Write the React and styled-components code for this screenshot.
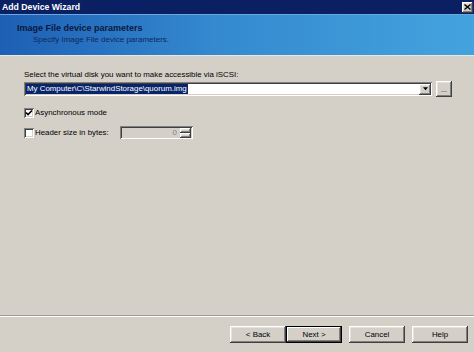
import React from 'react';
import styled, { createGlobalStyle, css } from 'styled-components';

const GlobalStyle = createGlobalStyle`
	html, body {
		margin: 0;
		padding: 0;
		background: #d4d0c8;
	}
	body {
		font-family: 'Liberation Sans', Arial, sans-serif;
		font-size: 7.9px;
		color: #000;
	}
`;

const bevelOut = css`
	box-shadow: inset -1px -1px 0 #404040, inset 1px 1px 0 #ffffff, inset -2px -2px 0 #808080, inset 2px 2px 0 #e4e2dc;
`;

const bevelIn = css`
	box-shadow: inset 1px 1px 0 #808080, inset -1px -1px 0 #ffffff, inset 2px 2px 0 #404040, inset -2px -2px 0 #d4d0c8;
`;

const Window = styled.div`
	width: 474px;
	height: 352px;
	display: flex;
	flex-direction: column;
	background: #d4d0c8;
	overflow: hidden;
`;

const TitleBar = styled.div`
	height: 14px;
	display: flex;
	align-items: center;
	justify-content: space-between;
	padding: 0 1px 0 2px;
	background: #0b1f63;
	color: #fff;
	font-weight: bold;
	font-size: 8.7px;
`;

const CloseButton = styled.div`
	width: 11px;
	height: 11px;
	display: flex;
	align-items: center;
	justify-content: center;
	background: #d4d0c8;
	${bevelOut};
`;

const Header = styled.div`
	height: 42px;
	padding: 8px 0 0 17px;
	box-sizing: border-box;
	border-top: 1px solid #6aa8e4;
	border-bottom: 1px solid #e9e7e2;
	background: linear-gradient(to right, #1d5fb4 0%, #3489cf 45%, #44a3de 100%);
	color: #0a1840;
`;

const Heading = styled.div`
	font-weight: bold;
	font-size: 9px;
	line-height: 11px;
`;

const SubHeading = styled.div`
	padding-left: 16px;
	line-height: 11px;
	font-size: 8px;
	color: #10285a;
`;

const Content = styled.div`
	display: flex;
	flex-direction: column;
	padding: 14px 0 0 24px;
`;

const Label = styled.div`
	line-height: 10px;
	margin-bottom: 1px;
`;

const ComboRow = styled.div`
	display: flex;
	align-items: center;
	gap: 4px;
`;

const Combo = styled.div`
	width: 408px;
	height: 14px;
	box-sizing: border-box;
	display: flex;
	align-items: center;
	justify-content: space-between;
	padding: 2px 1px 2px 2px;
	background: #fff;
	${bevelIn};
`;

const Selected = styled.span`
	background: #0a246a;
	color: #fff;
	line-height: 10px;
	padding: 0 1px;
`;

const ArrowButton = styled.div`
	width: ${(p) => p.w || 12}px;
	height: ${(p) => p.h || 11}px;
	display: flex;
	align-items: center;
	justify-content: center;
	background: #d4d0c8;
	${bevelOut};
`;

const BrowseButton = styled.div`
	width: 16px;
	height: 16px;
	display: flex;
	align-items: center;
	justify-content: center;
	background: #d4d0c8;
	font-size: 7px;
	line-height: 7px;
	${bevelOut};
`;

const CheckRow = styled.div`
	display: flex;
	align-items: center;
	margin-top: ${(p) => p.mt}px;
	height: 13px;
`;

const CheckBox = styled.div`
	width: 10px;
	height: 10px;
	margin-right: 1px;
	display: flex;
	align-items: center;
	justify-content: center;
	background: #fff;
	${bevelIn};
`;

const CheckText = styled.span`
	line-height: 10px;
	width: ${(p) => (p.w ? `${p.w}px` : 'auto')};
`;

const SpinBox = styled.div`
	width: 73px;
	height: 13px;
	box-sizing: border-box;
	display: flex;
	align-items: center;
	justify-content: flex-end;
	padding: 2px;
	gap: 3px;
	color: #808080;
	background: #d4d0c8;
	${bevelIn};
`;

const SpinArrows = styled.div`
	display: flex;
	flex-direction: column;
`;

const Footer = styled.div`
	margin-top: auto;
	border-top: 1px solid #a09d96;
	box-shadow: inset 0 1px 0 #ffffff;
	display: flex;
	justify-content: flex-end;
	padding: 10px 6px 9px 0;
`;

const Buttons = styled.div`
	display: flex;
	gap: 7px;
`;

const ButtonPair = styled.div`
	display: flex;
`;

const Button = styled.div`
	width: 56px;
	height: 17px;
	box-sizing: border-box;
	display: flex;
	align-items: center;
	justify-content: center;
	background: #d4d0c8;
	${bevelOut};
	${(p) =>
		p.primary &&
		css`
			box-shadow: inset 0 0 0 1px #000, inset -2px -2px 0 #404040, inset 2px 2px 0 #ffffff, inset -3px -3px 0 #808080;
		`}
`;

const TriangleDown = ({ size = 5 }) => (
	<svg width={size} height={Math.ceil(size / 2) + 1} viewBox="0 0 6 4">
		<polygon points="0,0 6,0 3,3.5" fill="#000" />
	</svg>
);

const Check = () => (
	<svg width="8" height="8" viewBox="0 0 8 8">
		<path d="M1 3.5 L3 5.5 L7 1.5" stroke="#000" strokeWidth="1.6" fill="none" />
	</svg>
);

const App = () => (
	<Window>
		<GlobalStyle />
		<TitleBar>
			<span>Add Device Wizard</span>
			<CloseButton>
				<svg width="7" height="6" viewBox="0 0 7 6">
					<path d="M0.5 0.5 L6.5 5.5 M6.5 0.5 L0.5 5.5" stroke="#000" strokeWidth="1.4" />
				</svg>
			</CloseButton>
		</TitleBar>
		<Header>
			<Heading>Image File device parameters</Heading>
			<SubHeading>Specify Image File device parameters.</SubHeading>
		</Header>
		<Content>
			<Label>Select the virtual disk you want to make accessible via iSCSI:</Label>
			<ComboRow>
				<Combo>
					<Selected>My Computer\C\StarwindStorage\quorum.img</Selected>
					<ArrowButton w={12} h={11}>
						<TriangleDown />
					</ArrowButton>
				</Combo>
				<BrowseButton>...</BrowseButton>
			</ComboRow>
			<CheckRow mt={9}>
				<CheckBox>
					<Check />
				</CheckBox>
				<CheckText>Asynchronous mode</CheckText>
			</CheckRow>
			<CheckRow mt={7}>
				<CheckBox />
				<CheckText w={85}>Header size in bytes:</CheckText>
				<SpinBox>
					<span>0</span>
					<SpinArrows>
						<ArrowButton w={11} h={5} />
						<ArrowButton w={11} h={5} />
					</SpinArrows>
				</SpinBox>
			</CheckRow>
		</Content>
		<Footer>
			<Buttons>
				<ButtonPair>
					<Button>&lt; Back</Button>
					<Button primary>Next &gt;</Button>
				</ButtonPair>
				<Button>Cancel</Button>
				<Button>Help</Button>
			</Buttons>
		</Footer>
	</Window>
);

export default App;
